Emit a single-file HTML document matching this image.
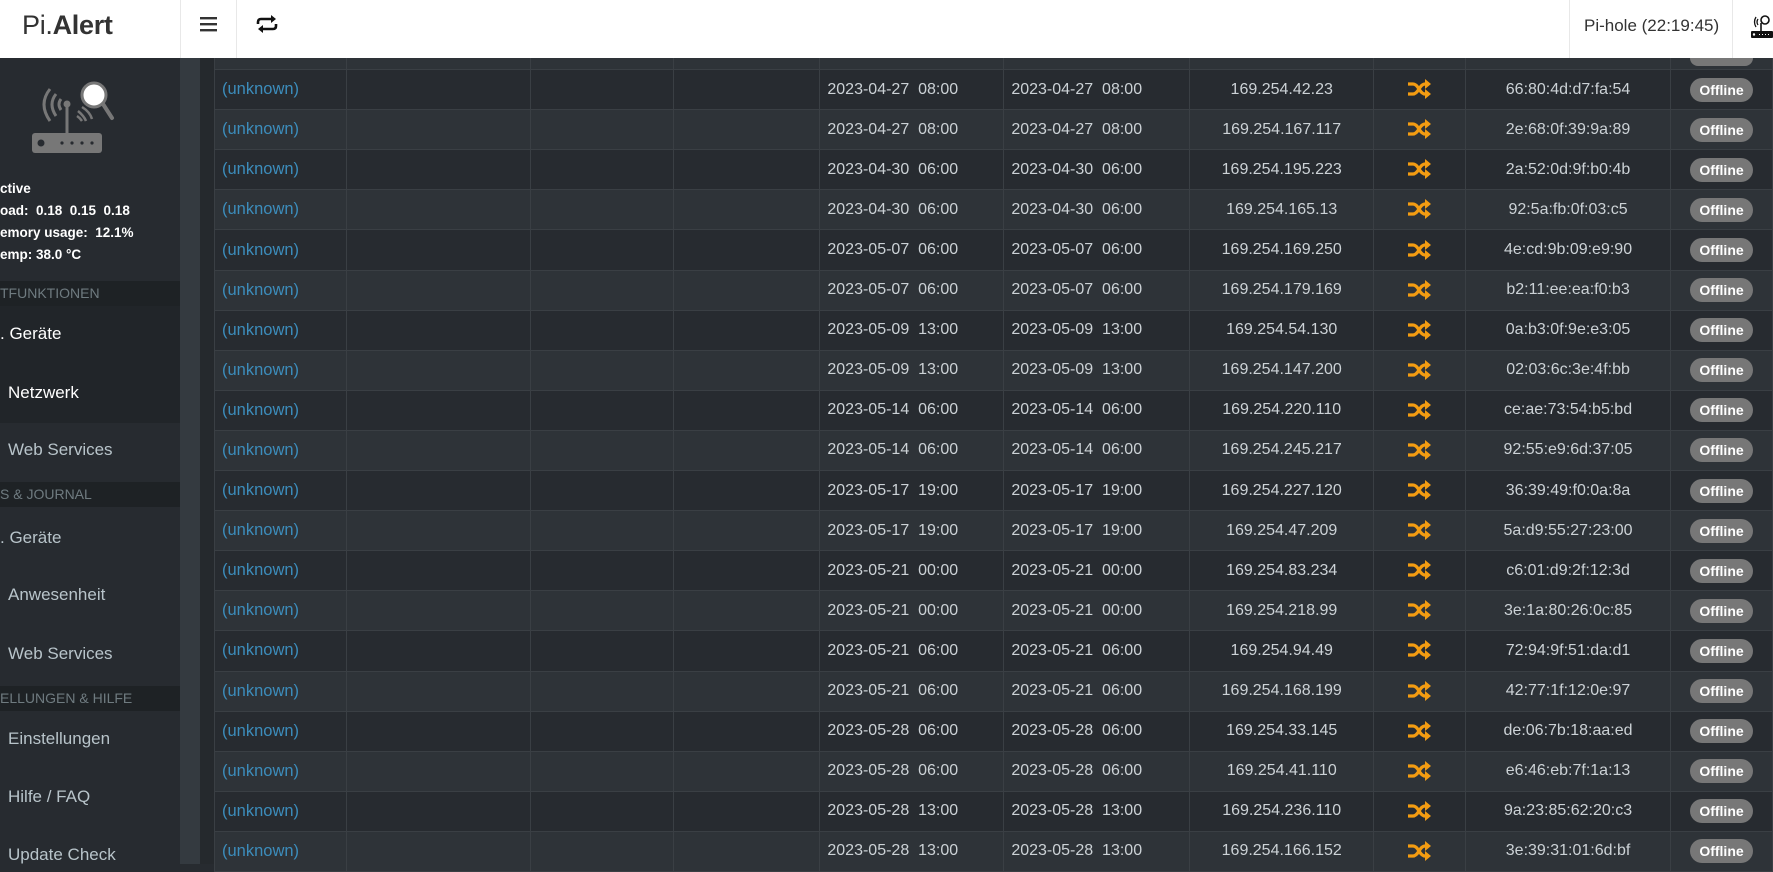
<!DOCTYPE html>
<html><head><meta charset="utf-8"><style>
*{margin:0;padding:0;box-sizing:border-box}
body{width:1773px;height:864px;overflow:hidden;background:#272b30;font-family:"Liberation Sans",sans-serif;position:relative}
.hdr{position:absolute;left:0;top:0;width:1773px;height:58px;background:#fff;z-index:5}
.vl{position:absolute;top:0;width:1px;height:58px;background:#e8e8e8}
.logo{position:absolute;left:22px;top:10px;font-size:27px;color:#333;letter-spacing:-0.3px}
.side{position:absolute;left:0;top:58px;width:180px;height:806px;background:#272b30;overflow:hidden}
.st{position:absolute;left:0;color:#fff;font-size:13.5px;font-weight:bold;white-space:nowrap}
.band{position:absolute;left:0;width:180px;height:25px;background:#1e2225;color:#6f7b80;font-size:14px;line-height:25px;white-space:nowrap}
.mi{position:absolute;left:8px;font-size:17px;color:#b8c4ca;white-space:nowrap}
.strip{position:absolute;left:180px;top:58px;width:20px;height:806px;background:#343a40}
.strip2{position:absolute;left:200px;top:58px;width:14px;height:806px;background:#25292d}
table{position:absolute;left:214px;top:29px;border-collapse:collapse;table-layout:fixed}
td{height:40.1px;border:1px solid #3a3f44;color:#ccd2d6;font-size:16px;white-space:nowrap;overflow:hidden}
tr:nth-child(odd) td{background:#2e3338}
tr:nth-child(even) td{background:#272b30}
.n{color:#3c8dbc;padding-left:7px;font-size:16.5px}
.d{padding-left:7px}
.c{text-align:center}
.b{display:inline-block;background:#777;color:#fff;font-weight:bold;font-size:14px;border-radius:12px;width:63px;height:24px;line-height:24px;text-align:center}
</style></head><body>
<div class="hdr">
 <div class="logo">Pi.<b>Alert</b></div>
 <div class="vl" style="left:180px"></div>
 <div class="vl" style="left:236px"></div>
 <svg style="position:absolute;left:200px;top:17px" width="18" height="15"><rect y="0" width="17" height="2.4" fill="#333"/><rect y="6" width="17" height="2.4" fill="#333"/><rect y="12" width="17" height="2.4" fill="#333"/></svg>
 <svg style="position:absolute;left:255px;top:13px" width="24" height="22" viewBox="0 0 24 22"><path d="M3 11 V9 Q3 6 6 6 H18" stroke="#111" stroke-width="2.6" fill="none"/><path d="M16 2 L21 6 L16 10Z" fill="#111"/><path d="M21 11 V13 Q21 16 18 16 H6" stroke="#111" stroke-width="2.6" fill="none"/><path d="M8 12 L3 16 L8 20Z" fill="#111"/></svg>
 <div class="vl" style="left:1569px"></div>
 <div style="position:absolute;left:1584px;top:16px;font-size:17px;color:#333">Pi-hole (22:19:45)</div>
 <div class="vl" style="left:1732px"></div>
 <svg style="position:absolute;left:1750px;top:14px" width="23" height="26" viewBox="0 0 23 26"><rect x="1" y="17" width="22" height="7" rx="1" fill="#111"/><circle cx="4" cy="20.5" r="1.2" fill="#fff"/><path d="M9 20.5h1M12 20.5h1M15 20.5h1M18 20.5h1" stroke="#fff"/><path d="M11 17V9" stroke="#111" stroke-width="1.6"/><circle cx="15" cy="6" r="4" fill="#fff" stroke="#111" stroke-width="1.6"/><path d="M6 3Q3 8 6 13M8 5Q6 8 8 11" stroke="#111" stroke-width="1.3" fill="none"/></svg>
</div>
<div class="side">
 <svg style="position:absolute;left:30px;top:22px" width="90" height="80" viewBox="30 80 90 80">
  <rect x="32" y="133" width="70" height="20" rx="3" fill="#777"/>
  <circle cx="41" cy="143" r="3.5" fill="#272b30"/>
  <circle cx="62" cy="143" r="1.6" fill="#272b30"/><circle cx="72" cy="143" r="1.6" fill="#272b30"/><circle cx="82" cy="143" r="1.6" fill="#272b30"/><circle cx="92" cy="143" r="1.6" fill="#272b30"/>
  <path d="M67 133V105" stroke="#777" stroke-width="3"/><circle cx="67" cy="104" r="3.5" fill="#777"/>
  <path d="M50 89Q38 104 50 121M56 94Q48 104 56 116M61 99Q57 104 61 110" stroke="#777" stroke-width="3" fill="none"/>
  <path d="M78 111Q84 116 86 121M82 107Q90 112 92 119M77 116Q80 118 82 121" stroke="#777" stroke-width="2.5" fill="none"/>
  <path d="M103 104L112 118" stroke="#777" stroke-width="4" stroke-linecap="round"/>
  <circle cx="94" cy="95" r="12" fill="#fff" stroke="#777" stroke-width="3"/>
 </svg>
 <div class="st" style="top:123px">ctive</div>
 <div class="st" style="top:145px">oad:&nbsp; 0.18&nbsp; 0.15&nbsp; 0.18</div>
 <div class="st" style="top:167px">emory usage:&nbsp; 12.1%</div>
 <div class="st" style="top:189px">emp: 38.0 °C</div>
 <div class="band" style="top:223px">TFUNKTIONEN</div>
 <div style="position:absolute;left:0;top:248px;width:180px;height:117px;background:#212529"></div>
 <div class="mi" style="top:266px;color:#fff;left:0">. Geräte</div>
 <div class="mi" style="top:325px;color:#fff">Netzwerk</div>
 <div class="mi" style="top:382px">Web Services</div>
 <div class="band" style="top:424px">S &amp; JOURNAL</div>
 <div class="mi" style="top:470px;left:0">. Geräte</div>
 <div class="mi" style="top:527px">Anwesenheit</div>
 <div class="mi" style="top:586px">Web Services</div>
 <div class="band" style="top:628px">ELLUNGEN &amp; HILFE</div>
 <div class="mi" style="top:671px">Einstellungen</div>
 <div class="mi" style="top:729px">Hilfe / FAQ</div>
 <div class="mi" style="top:787px">Update Check</div>
</div>
<div class="strip"></div><div class="strip2"></div>
<table>
<colgroup><col style="width:132px"><col style="width:184px"><col style="width:143px"><col style="width:147px"><col style="width:184px"><col style="width:186px"><col style="width:184px"><col style="width:92px"><col style="width:205px"><col style="width:102px"></colgroup>
<tbody id="tb"></tbody>
</table>
<script>
var R=[["",""," ",""],
["2023-04-27  08:00","169.254.42.23","66:80:4d:d7:fa:54"],
["2023-04-27  08:00","169.254.167.117","2e:68:0f:39:9a:89"],
["2023-04-30  06:00","169.254.195.223","2a:52:0d:9f:b0:4b"],
["2023-04-30  06:00","169.254.165.13","92:5a:fb:0f:03:c5"],
["2023-05-07  06:00","169.254.169.250","4e:cd:9b:09:e9:90"],
["2023-05-07  06:00","169.254.179.169","b2:11:ee:ea:f0:b3"],
["2023-05-09  13:00","169.254.54.130","0a:b3:0f:9e:e3:05"],
["2023-05-09  13:00","169.254.147.200","02:03:6c:3e:4f:bb"],
["2023-05-14  06:00","169.254.220.110","ce:ae:73:54:b5:bd"],
["2023-05-14  06:00","169.254.245.217","92:55:e9:6d:37:05"],
["2023-05-17  19:00","169.254.227.120","36:39:49:f0:0a:8a"],
["2023-05-17  19:00","169.254.47.209","5a:d9:55:27:23:00"],
["2023-05-21  00:00","169.254.83.234","c6:01:d9:2f:12:3d"],
["2023-05-21  00:00","169.254.218.99","3e:1a:80:26:0c:85"],
["2023-05-21  06:00","169.254.94.49","72:94:9f:51:da:d1"],
["2023-05-21  06:00","169.254.168.199","42:77:1f:12:0e:97"],
["2023-05-28  06:00","169.254.33.145","de:06:7b:18:aa:ed"],
["2023-05-28  06:00","169.254.41.110","e6:46:eb:7f:1a:13"],
["2023-05-28  13:00","169.254.236.110","9a:23:85:62:20:c3"],
["2023-05-28  13:00","169.254.166.152","3e:39:31:01:6d:bf"]];
var ic='<svg width="25" height="20" viewBox="0 0 25 20"><path d="M1 5H6Q9 5 12 10Q15 15 18 15H20M1 15H6Q9 15 12 10Q15 5 18 5H20" stroke="#f39c12" stroke-width="3.2" fill="none"/><path d="M18 0L24 5L18 10ZM18 10L24 15L18 20Z" fill="#f39c12"/></svg>';
var h='';
R.forEach(function(r,i){
 if(i==0){h+='<tr><td></td><td></td><td></td><td></td><td></td><td></td><td></td><td></td><td></td><td class="c" style="vertical-align:bottom"><span class="b" style="height:8px;margin-bottom:-2px;border-radius:0 0 12px 12px"></span></td></tr>';return;}
 var d=r[0].replace('  ','&nbsp;&nbsp;');
 h+='<tr><td class="n">(unknown)</td><td></td><td></td><td></td><td class="d">'+d+'</td><td class="d">'+d+'</td><td class="c">'+r[1]+'</td><td class="c" style="padding-top:4px">'+ic+'</td><td class="c">'+r[2]+'</td><td class="c"><span class="b">Offline</span></td></tr>';
});
document.getElementById('tb').innerHTML=h;
</script>
</body></html>
